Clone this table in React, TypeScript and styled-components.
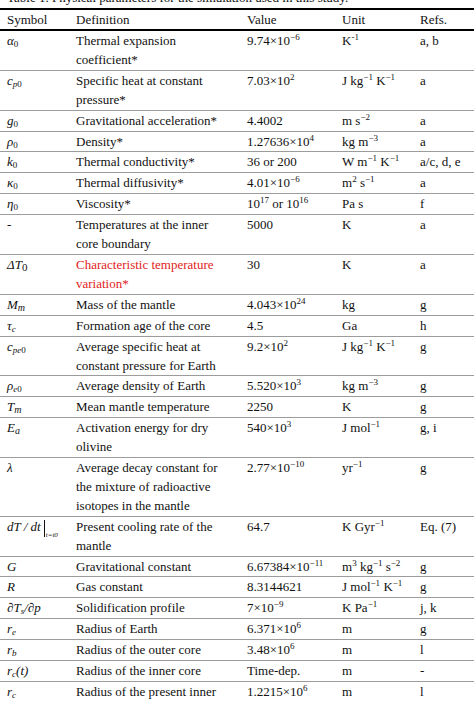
import React from "react";
import styled, { createGlobalStyle } from "styled-components";

const GlobalStyle = createGlobalStyle`
  html, body {
    margin: 0;
    padding: 0;
    background: #fff;
  }
  body {
    font-family: "Liberation Serif", "Times New Roman", serif;
    color: #111;
    overflow: hidden;
  }
`;

const Page = styled.div`
  width: 474px;
  margin-top: -12px;
`;

const Title = styled.div`
  font-size: 13px;
  line-height: 19px;
  padding: 0 0 1px 7px;
  white-space: nowrap;
`;

const Table = styled.table`
  width: 474px;
  border-collapse: collapse;
  table-layout: fixed;
  border-top: 2px solid #000;
  font-size: 13px;
  line-height: 19px;
`;

const Col = styled.col<{ $w: number }>`
  width: ${(p) => p.$w}px;
`;

const Th = styled.th`
  text-align: left;
  font-weight: 400;
  vertical-align: top;
  padding: 0 6px;
  border-bottom: 2px solid #000;

  &:first-child {
    padding-left: 7px;
  }
`;

const Td = styled.td<{ $red?: boolean; $wide?: boolean }>`
  vertical-align: top;
  line-height: 18.9px;
  padding: 1px ${(p) => (p.$wide ? 16 : 4)}px 0 6px;
  border-bottom: 1px solid #9c9c9c;
  color: ${(p) => (p.$red ? "#e2231a" : "#111")};

  &:first-child {
    padding-left: 7px;
  }
`;

const I = styled.i`
  font-style: italic;
  line-height: 1;
`;

const Sub = styled.sub<{ $size?: number }>`
  font-size: ${(p) => p.$size ?? 9}px;
  line-height: 0;
  vertical-align: -2px;
`;

const Sup = styled.sup`
  font-size: 9px;
  line-height: 0;
  vertical-align: 5px;
`;

const EvalBar = styled.span`
  display: inline-block;
  width: 0;
  height: 17px;
  margin: 0 1px 0 3px;
  border-left: 1px solid #111;
  vertical-align: -6px;
`;

const EvalSub = styled.span`
  font-size: 7px;
  font-style: italic;
  line-height: 0;
  vertical-align: -6px;
`;

type Row = {
  sym: React.ReactNode;
  def: React.ReactNode;
  value: React.ReactNode;
  unit: React.ReactNode;
  refs: string;
  red?: boolean;
};

const x10 = (m: string, e: string) => (
  <>
    {m}×10<Sup>{e}</Sup>
  </>
);

const rows: Row[] = [
  {
    sym: (<><I>α</I><Sub>0</Sub></>),
    def: "Thermal expansion coefficient*",
    value: x10("9.74", "−6"),
    unit: (<>K<Sup>-1</Sup></>),
    refs: "a, b",
  },
  {
    sym: (<><I>c</I><Sub><I>p</I>0</Sub></>),
    def: "Specific heat at constant pressure*",
    value: x10("7.03", "2"),
    unit: (<>J kg<Sup>−1</Sup> K<Sup>−1</Sup></>),
    refs: "a",
  },
  {
    sym: (<><I>g</I><Sub>0</Sub></>),
    def: "Gravitational acceleration*",
    value: "4.4002",
    unit: (<>m s<Sup>−2</Sup></>),
    refs: "a",
  },
  {
    sym: (<><I>ρ</I><Sub>0</Sub></>),
    def: "Density*",
    value: x10("1.27636", "4"),
    unit: (<>kg m<Sup>−3</Sup></>),
    refs: "a",
  },
  {
    sym: (<><I>k</I><Sub>0</Sub></>),
    def: "Thermal conductivity*",
    value: "36 or 200",
    unit: (<>W m<Sup>−1</Sup> K<Sup>−1</Sup></>),
    refs: "a/c, d, e",
  },
  {
    sym: (<><I>κ</I><Sub>0</Sub></>),
    def: "Thermal diffusivity*",
    value: x10("4.01", "−6"),
    unit: (<>m<Sup>2</Sup> s<Sup>−1</Sup></>),
    refs: "a",
  },
  {
    sym: (<><I>η</I><Sub>0</Sub></>),
    def: "Viscosity*",
    value: (<>10<Sup>17</Sup> or 10<Sup>16</Sup></>),
    unit: "Pa s",
    refs: "f",
  },
  {
    sym: "-",
    def: "Temperatures at the inner core boundary",
    value: "5000",
    unit: "K",
    refs: "a",
  },
  {
    sym: (<><I>ΔT</I><Sub $size={11}>0</Sub></>),
    def: "Characteristic temperature variation*",
    value: "30",
    unit: "K",
    refs: "a",
    red: true,
  },
  {
    sym: (<><I>M</I><Sub $size={10}><I>m</I></Sub></>),
    def: "Mass of the mantle",
    value: x10("4.043", "24"),
    unit: "kg",
    refs: "g",
  },
  {
    sym: (<><I>τ</I><Sub><I>c</I></Sub></>),
    def: "Formation age of the core",
    value: "4.5",
    unit: "Ga",
    refs: "h",
  },
  {
    sym: (<><I>c</I><Sub><I>pe</I>0</Sub></>),
    def: "Average specific heat at constant pressure for Earth",
    value: x10("9.2", "2"),
    unit: (<>J kg<Sup>−1</Sup> K<Sup>−1</Sup></>),
    refs: "g",
  },
  {
    sym: (<><I>ρ</I><Sub><I>e</I>0</Sub></>),
    def: "Average density of Earth",
    value: x10("5.520", "3"),
    unit: (<>kg m<Sup>−3</Sup></>),
    refs: "g",
  },
  {
    sym: (<><I>T</I><Sub $size={10}><I>m</I></Sub></>),
    def: "Mean mantle temperature",
    value: "2250",
    unit: "K",
    refs: "g",
  },
  {
    sym: (<><I>E</I><Sub $size={10}><I>a</I></Sub></>),
    def: "Activation energy for dry olivine",
    value: x10("540", "3"),
    unit: (<>J mol<Sup>−1</Sup></>),
    refs: "g, i",
  },
  {
    sym: <I>λ</I>,
    def: "Average decay constant for the mixture of radioactive isotopes in the mantle",
    value: x10("2.77", "−10"),
    unit: (<>yr<Sup>−1</Sup></>),
    refs: "g",
  },
  {
    sym: (
      <>
        <I>dT / dt</I>
        <EvalBar />
        <EvalSub>t=t0</EvalSub>
      </>
    ),
    def: "Present cooling rate of the mantle",
    value: "64.7",
    unit: (<>K Gyr<Sup>−1</Sup></>),
    refs: "Eq. (7)",
  },
  {
    sym: <I>G</I>,
    def: "Gravitational constant",
    value: x10("6.67384", "−11"),
    unit: (<>m<Sup>3</Sup> kg<Sup>−1</Sup> s<Sup>−2</Sup></>),
    refs: "g",
  },
  {
    sym: <I>R</I>,
    def: "Gas constant",
    value: "8.3144621",
    unit: (<>J mol<Sup>−1</Sup> K<Sup>−1</Sup></>),
    refs: "g",
  },
  {
    sym: (<I>∂T<Sub><I>s</I></Sub>/∂p</I>),
    def: "Solidification profile",
    value: x10("7", "−9"),
    unit: (<>K Pa<Sup>−1</Sup></>),
    refs: "j, k",
  },
  {
    sym: (<><I>r</I><Sub><I>e</I></Sub></>),
    def: "Radius of Earth",
    value: x10("6.371", "6"),
    unit: "m",
    refs: "g",
  },
  {
    sym: (<><I>r</I><Sub><I>b</I></Sub></>),
    def: "Radius of the outer core",
    value: x10("3.48", "6"),
    unit: "m",
    refs: "l",
  },
  {
    sym: (<><I>r</I><Sub><I>c</I></Sub><I>(t)</I></>),
    def: "Radius of the inner core",
    value: "Time-dep.",
    unit: "m",
    refs: "-",
  },
  {
    sym: (<><I>r</I><Sub><I>c</I></Sub></>),
    def: "Radius of the present inner core",
    value: x10("1.2215", "6"),
    unit: "m",
    refs: "l",
  },
];

export default function App() {
  return (
    <Page>
      <GlobalStyle />
      <Title>Table 1. Physical parameters for the simulation used in this study.</Title>
      <Table>
        <colgroup>
          <Col $w={70} />
          <Col $w={171} />
          <Col $w={95} />
          <Col $w={78} />
          <Col $w={60} />
        </colgroup>
        <thead>
          <tr>
            <Th>Symbol</Th>
            <Th>Definition</Th>
            <Th>Value</Th>
            <Th>Unit</Th>
            <Th>Refs.</Th>
          </tr>
        </thead>
        <tbody>
          {rows.map((r, i) => (
            <tr key={i}>
              <Td>{r.sym}</Td>
              <Td $wide $red={r.red}>
                {r.def}
              </Td>
              <Td>{r.value}</Td>
              <Td>{r.unit}</Td>
              <Td>{r.refs}</Td>
            </tr>
          ))}
        </tbody>
      </Table>
    </Page>
  );
}
